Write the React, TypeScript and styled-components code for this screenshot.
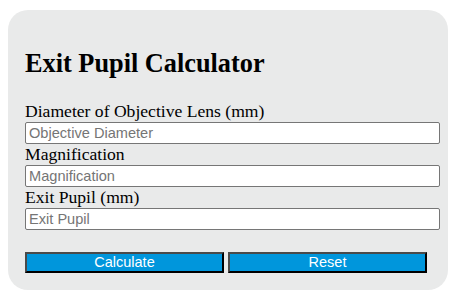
import styled, { createGlobalStyle } from "styled-components";

const GlobalStyle = createGlobalStyle`
  body {
    margin: 0;
    background: #ffffff;
    font-family: "Liberation Serif", "Times New Roman", serif;
  }
`;

const Panel = styled.div`
  width: 440px;
  height: 280px;
  margin: 10px 0 0 8px;
  padding: 0 0 0 17px;
  box-sizing: border-box;
  background-color: #e9eaea;
  border-radius: 20px;
  color: #000;
`;

const Title = styled.h2`
  margin: 0;
  padding-top: 39px;
  font-size: 26.3px;
  font-weight: bold;
  line-height: 30px;
`;

const Form = styled.form`
  margin-top: 22px;
  width: 415px;
`;

const Label = styled.label`
  display: block;
  font-size: 17.6px;
  line-height: 21px;
`;

const Input = styled.input`
  display: block;
  width: 415px;
  height: 22px;
  box-sizing: border-box;
  margin: 0;
  padding: 1px 3px;
  border: 1px solid #767676;
  border-radius: 2px;
  background: #fff;
  font-family: "Liberation Sans", Arial, sans-serif;
  font-size: 14.6px;

  &::placeholder {
    color: #757575;
  }
`;

const Buttons = styled.div`
  display: flex;
  gap: 4px;
  margin-top: 22px;
`;

const Button = styled.button`
  width: 199px;
  height: 21px;
  box-sizing: border-box;
  padding: 0;
  background-color: #0096dc;
  color: #fff;
  border-style: solid;
  border-width: 2px;
  border-color: #4a4a4a #000 #000 #4a4a4a;
  font-family: "Liberation Sans", Arial, sans-serif;
  font-size: 14.5px;
  line-height: 17px;
  cursor: pointer;
`;

export default function App() {
  return (
    <>
      <GlobalStyle />
      <Panel>
        <Title>Exit Pupil Calculator</Title>
        <Form onSubmit={(e) => e.preventDefault()}>
          <Label>Diameter of Objective Lens (mm)</Label>
          <Input type="text" placeholder="Objective Diameter" />
          <Label>Magnification</Label>
          <Input type="text" placeholder="Magnification" />
          <Label>Exit Pupil (mm)</Label>
          <Input type="text" placeholder="Exit Pupil" />
          <Buttons>
            <Button type="button">Calculate</Button>
            <Button type="reset">Reset</Button>
          </Buttons>
        </Form>
      </Panel>
    </>
  );
}
